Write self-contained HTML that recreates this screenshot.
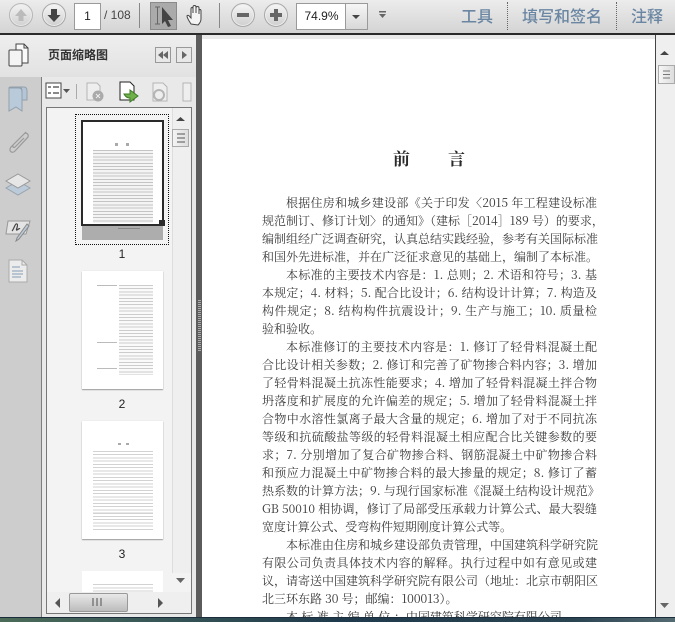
<!DOCTYPE html>
<html><head><meta charset="utf-8">
<style>
html,body{margin:0;padding:0;width:675px;height:622px;overflow:hidden;background:#fff}
body{position:relative;font-family:"Liberation Sans","Noto Sans CJK SC",sans-serif}
.a{position:absolute}
.l{position:absolute;left:262px;width:335px;height:18px;line-height:18px;font-size:12px;color:#3a3a3a;font-family:"Noto Serif CJK SC","Liberation Serif",serif;text-align:justify;text-align-last:justify;white-space:nowrap;font-weight:400;filter:blur(.25px)}
.l.i{left:286px;width:311px}
.l.e{text-align-last:left}
.rb{position:absolute;border-radius:50%;width:22px;height:22px;border:1px solid #a8a8a8;background:linear-gradient(#f6f6f6,#cfcfcf);box-shadow:inset 0 0 0 1px #eee}
.tab{position:absolute;top:5px;font-size:16px;line-height:21px;color:#6a86a2;font-family:"Noto Sans CJK SC",sans-serif;font-weight:500;white-space:nowrap}
.dots{position:absolute;top:2px;height:28px;border-left:1px dotted #666}
.th{position:absolute;left:82px;width:81px;background:#fff;box-shadow:0 1px 1px #999,0 0 1px #ddd}
.n{position:absolute;left:82px;width:80px;text-align:center;font-size:12px;color:#222;line-height:14px}
</style></head><body>
<!-- toolbar -->
<div class="a" style="left:0;top:0;width:675px;height:33px;background:linear-gradient(#ececec,#d4d4d4)"></div>
<div class="a" style="left:0;top:33px;width:675px;height:2px;background:#2b2b2b"></div>
<div class="rb" style="left:9px;top:3px;opacity:.75"></div>
<svg class="a" style="left:9px;top:3px" width="24" height="24"><path d="M12 6l6 7h-3.500v5h-5v-5H6z" fill="#bbb"/></svg>
<div class="rb" style="left:42px;top:3px"></div>
<svg class="a" style="left:42px;top:3px" width="24" height="24"><path d="M12 19l-6.500-7H9V6h6v6h3.500z" fill="#444"/></svg>
<div class="a" style="left:74px;top:3px;width:25px;height:25px;background:#fff;border:1px solid #9a9a9a;font-size:12px;line-height:25px;text-align:center;color:#222">1</div>
<div class="a" style="left:104px;top:7px;font-size:12px;line-height:16px;color:#444">/ 108</div>
<div class="a" style="left:139px;top:3px;height:25px;border-left:1px solid #888"></div>
<div class="a" style="left:150px;top:2px;width:25px;height:26px;background:#aaa;border:1px solid #8a8a8a"></div>
<svg class="a" style="left:150px;top:2px" width="27" height="28"><path d="M5 5h5M7.500 5v17M5 22h5" stroke="#666" fill="none"/><path d="M12 5l11 13h-5l3 6-3 1-3-6-3 3z" fill="#444"/></svg>
<svg class="a" style="left:185px;top:4px" width="22" height="24"><path d="M6 20c-2-3-4-6-4-8 0-1 2-1 3 1l1 1V5c0-2 2-2 2 0v4-6c0-2 3-2 3 0v6-5c0-2 3-2 3 0v6-3c0-2 2-2 2 0v8c0 3-2 5-3 6z" fill="#f4f4f4" stroke="#444" stroke-width="1"/></svg>
<div class="a" style="left:219px;top:3px;height:25px;border-left:1px solid #888"></div>
<div class="rb" style="left:231px;top:3px"></div>
<svg class="a" style="left:231px;top:3px" width="24" height="24"><rect x="6" y="10" width="12" height="4" fill="#666"/></svg>
<div class="rb" style="left:264px;top:3px"></div>
<svg class="a" style="left:264px;top:3px" width="24" height="24"><path d="M6 10h4V6h4v4h4v4h-4v4h-4v-4H6z" fill="#666"/></svg>
<div class="a" style="left:296px;top:3px;width:49px;height:25px;background:#fff;border:1px solid #9a9a9a;font-size:12px;line-height:25px;text-align:center;color:#222">74.9%</div>
<div class="a" style="left:345px;top:3px;width:21px;height:25px;background:linear-gradient(#f6f6f6,#d8d8d8);border:1px solid #9a9a9a"></div>
<svg class="a" style="left:345px;top:3px" width="22" height="27"><path d="M7 12h8l-4 4z" fill="#444"/></svg>
<svg class="a" style="left:378px;top:10px" width="10" height="10"><path d="M1 1h7v1.500H1zM1 4h7L4.500 8z" fill="#666"/></svg>
<div class="tab" style="left:461px">工具</div>
<div class="dots" style="left:507px"></div>
<div class="tab" style="left:522px">填写和签名</div>
<div class="dots" style="left:616px"></div>
<div class="tab" style="left:631px">注释</div>
<!-- left panel -->
<div class="a" style="left:0;top:35px;width:197px;height:582px;background:#cdcdcd"></div>
<div class="a" style="left:0;top:35px;width:197px;height:42px;background:linear-gradient(#eeeeee,#e2e2e2)"></div>
<svg class="a" style="left:7px;top:42px" width="24" height="26"><path d="M9 9V2h8l4 4v15h-6" fill="#fafafa" stroke="#444"/><path d="M17 2v4h4" fill="none" stroke="#444"/><rect x="2" y="8" width="13" height="16" rx="1" fill="#f4f4f4" stroke="#444"/></svg>
<div class="a" style="left:48px;top:45px;font-size:12px;line-height:20px;font-weight:700;color:#333;font-family:'Noto Sans CJK SC',sans-serif">页面缩略图</div>
<div class="a" style="left:155px;top:47px;width:14px;height:14px;border:1px solid #999;background:#e8e8e8"></div>
<svg class="a" style="left:155px;top:47px" width="16" height="16"><path d="M8 4v8L3 8zM13 4v8L8 8z" fill="#666"/></svg>
<div class="a" style="left:176px;top:47px;width:14px;height:14px;border:1px solid #999;background:#e8e8e8"></div>
<svg class="a" style="left:176px;top:47px" width="16" height="16"><path d="M6 4v8l5-4z" fill="#666"/></svg>
<!-- left rail icons -->
<svg class="a" style="left:7px;top:85px" width="22" height="30"><path d="M2 3q0-1 2-1h13q3 0 3 4v9h-5V6q0-4-3-4" fill="#b4c6d6" stroke="#92a0ac"/><path d="M2 3h10q3 0 3 4v19l-6-4-7 4z" fill="#b9cbdb" stroke="#92a0ac"/></svg>
<svg class="a" style="left:6px;top:129px" width="24" height="28"><path d="M20 3L5 18c-3 4 1 7 4 4L22 8c1-3-2-5-4-3L7 16c-1 2 1 3 2 2l9-9" fill="none" stroke="#999" stroke-width="1.200"/></svg>
<svg class="a" style="left:5px;top:172px" width="26" height="28"><path d="M13 9l12 7-12 7-12-7z" fill="#bccbd9" stroke="#98a4ae"/><path d="M13 2l12 7-12 7L1 9z" fill="#e6e6e6" stroke="#999"/></svg>
<svg class="a" style="left:5px;top:218px" width="26" height="24"><path d="M3 3h22l-4 13H1z" fill="#e4e4e4" stroke="#999"/><path d="M7 13c2-2 3-8 5-7s-2 7 0 6 2-2 3-1" fill="none" stroke="#444" stroke-width="1.200"/><path d="M22 6L12 20l-1 3 3-2L24 8z" fill="#bccbd9" stroke="#888"/></svg>
<svg class="a" style="left:7px;top:258px" width="22" height="26"><path d="M2 2h13l5 5v17H2z" fill="#ececec" stroke="#aaa"/><path d="M15 2v5h5" fill="none" stroke="#aaa"/><path d="M5 9h8M5 13h11M5 16h11M5 19h9" stroke="#a6b6c5" stroke-width="1.500"/></svg>
<!-- thumbnails pane -->
<div class="a" style="left:41px;top:77px;width:1px;height:540px;background:#7d7d7d"></div>
<div class="a" style="left:42px;top:77px;width:155px;height:540px;background:#e9e9e9"></div>
<svg class="a" style="left:45px;top:82px" width="28" height="18"><rect x="1" y="1" width="15" height="15" fill="#fff" stroke="#444"/><path d="M3 5h3M8 5h6M3 11h3M8 11h6" stroke="#444" stroke-width="1.300"/><path d="M18 7h7l-3.500 4z" fill="#555"/></svg>
<div class="a" style="left:76px;top:84px;height:15px;border-left:1px solid #aaa"></div>
<svg class="a" style="left:85px;top:81px" width="20" height="22"><path d="M2 2h10l3 3v14H2z" fill="#eee" stroke="#b5b5b5"/><circle cx="13" cy="15" r="5.500" fill="#aaa"/><path d="M11 13l4 4m0-4l-4 4" stroke="#eee"/></svg>
<svg class="a" style="left:118px;top:81px" width="22" height="22"><path d="M2 1h10l4 4v14H2z" fill="#fff" stroke="#222"/><path d="M6 13h6V9l8 6-8 6v-4q-4 0-6-4z" fill="#6fb04a" stroke="#3d7a25"/></svg>
<svg class="a" style="left:150px;top:81px" width="20" height="22"><path d="M3 2h10l4 4v14H3z" fill="#eee" stroke="#b5b5b5"/><circle cx="9" cy="14" r="5" fill="none" stroke="#b5b5b5" stroke-width="2"/></svg>
<svg class="a" style="left:182px;top:81px" width="10" height="22"><path d="M1 2h8v18H1z" fill="#eee" stroke="#b5b5b5"/></svg>
<div class="a" style="left:46px;top:107px;width:146px;height:507px;background:#f3f3f3;border:1px solid #777;box-sizing:border-box;overflow:hidden">
 <div class="a" style="left:125px;top:0;width:20px;height:465px;background:#efefef;border-left:1px solid #ddd;box-sizing:border-box"></div>
</div>
<!-- thumb 1 -->
<div class="a" style="left:75px;top:114px;width:94px;height:131px;border:1px dotted #111;box-sizing:border-box"></div>
<div class="a" style="left:81px;top:120px;width:83px;height:106px;background:#fff;border:2px solid #2a2a2a;box-sizing:border-box;overflow:hidden">
 <div class="a" style="left:32px;top:21px;width:3px;height:3px;background:#aaa"></div>
 <div class="a" style="left:43px;top:21px;width:3px;height:3px;background:#aaa"></div>
 <div class="a" style="left:10px;top:28px;width:60px;height:73px;background:repeating-linear-gradient(#c4c4c4 0 1px,#f4f4f4 1px 3.200px)"></div>
</div>
<div class="a" style="left:159px;top:220px;width:6px;height:6px;background:#2a2a2a"></div>
<div class="a" style="left:82px;top:226px;width:81px;height:14px;background:#adadad"></div>
<div class="a" style="left:118px;top:228px;width:22px;height:1px;background:#888"></div>
<div class="n" style="top:247px">1</div>
<!-- thumb 2 -->
<div class="th" style="top:271px;height:118px">
 <div class="a" style="left:15px;top:14px;width:20px;height:1px;background:#bbb"></div>
 <div class="a" style="left:37px;top:14px;width:34px;height:90px;background:repeating-linear-gradient(#ccc 0 1px,#fafafa 1px 3.200px)"></div>
 <div class="a" style="left:15px;top:71px;width:20px;height:1px;background:#bbb"></div>
 <div class="a" style="left:15px;top:97px;width:20px;height:1px;background:#bbb"></div>
</div>
<div class="n" style="top:397px">2</div>
<!-- thumb 3 -->
<div class="th" style="top:421px;height:118px">
 <div class="a" style="left:36px;top:22px;width:3px;height:2px;background:#aaa"></div>
 <div class="a" style="left:44px;top:22px;width:3px;height:2px;background:#aaa"></div>
 <div class="a" style="left:11px;top:30px;width:60px;height:79px;background:repeating-linear-gradient(#d2d2d2 0 1px,#fff 1px 3.250px)"></div>
</div>
<div class="n" style="top:547px">3</div>
<!-- thumb 4 -->
<div class="a" style="left:82px;top:571px;width:81px;height:21px;background:#fff;overflow:hidden">
 <div class="a" style="left:11px;top:13px;width:60px;height:8px;background:repeating-linear-gradient(#d2d2d2 0 1px,#fff 1px 3.250px)"></div>
</div>
<!-- thumb v scrollbar -->
<svg class="a" style="left:172px;top:112px" width="18" height="14"><path d="M4 9h9L8.500 5z" fill="#444"/></svg>
<div class="a" style="left:172px;top:129px;width:17px;height:18px;background:linear-gradient(90deg,#f4f4f4,#ddd);border:1px solid #aaa;box-sizing:border-box"></div>
<svg class="a" style="left:172px;top:129px" width="18" height="18"><path d="M5 5h8M5 9h8M5 13h8" stroke="#555"/></svg>
<svg class="a" style="left:172px;top:574px" width="18" height="12"><path d="M4 4h9L8.500 9z" fill="#666"/></svg>
<!-- thumb h scrollbar -->
<div class="a" style="left:47px;top:592px;width:144px;height:21px;background:#efefef"></div>
<svg class="a" style="left:52px;top:596px" width="12" height="14"><path d="M8 2v10L3 7z" fill="#555"/></svg>
<div class="a" style="left:69px;top:593px;width:59px;height:19px;background:linear-gradient(#e8e8e8,#bcbcbc);border:1px solid #999;border-radius:2px;box-sizing:border-box"></div>
<svg class="a" style="left:90px;top:596px" width="16" height="12"><path d="M3 2v8M7 2v8M11 2v8" stroke="#666" stroke-width="1.200"/></svg>
<svg class="a" style="left:155px;top:596px" width="12" height="14"><path d="M3 2v10l5-5z" fill="#555"/></svg>
<!-- divider -->
<div class="a" style="left:196px;top:35px;width:6px;height:582px;background:#5c5c5c"></div>
<div class="a" style="left:198px;top:300px;width:3px;height:52px;background:repeating-linear-gradient(#aaa 0 1px,#5c5c5c 1px 2px)"></div>
<!-- document -->
<div class="a" style="left:202px;top:35px;width:453px;height:4px;background:#eaeaea"></div>
<div class="a" style="left:393px;top:147px;font-size:17px;line-height:22px;font-weight:700;color:#2a2a2a;font-family:'Noto Serif CJK SC',serif;white-space:nowrap">前<span style="margin-left:38px">言</span></div>
<div class="l i" style="top:194px">根据住房和城乡建设部《关于印发〈2015 年工程建设标准</div>
<div class="l" style="top:212px">规范制订、修订计划〉的通知》（建标［2014］189 号）的要求，</div>
<div class="l" style="top:230px">编制组经广泛调查研究，认真总结实践经验，参考有关国际标准</div>
<div class="l" style="top:248px">和国外先进标准，并在广泛征求意见的基础上，编制了本标准。</div>
<div class="l i" style="top:266px">本标准的主要技术内容是：1. 总则；2. 术语和符号；3. 基</div>
<div class="l" style="top:284px">本规定；4. 材料；5. 配合比设计；6. 结构设计计算；7. 构造及</div>
<div class="l" style="top:302px">构件规定；8. 结构构件抗震设计；9. 生产与施工；10. 质量检</div>
<div class="l e" style="top:320px">验和验收。</div>
<div class="l i" style="top:338px">本标准修订的主要技术内容是：1. 修订了轻骨料混凝土配</div>
<div class="l" style="top:356px">合比设计相关参数；2. 修订和完善了矿物掺合料内容；3. 增加</div>
<div class="l" style="top:374px">了轻骨料混凝土抗冻性能要求；4. 增加了轻骨料混凝土拌合物</div>
<div class="l" style="top:392px">坍落度和扩展度的允许偏差的规定；5. 增加了轻骨料混凝土拌</div>
<div class="l" style="top:410px">合物中水溶性氯离子最大含量的规定；6. 增加了对于不同抗冻</div>
<div class="l" style="top:428px">等级和抗硫酸盐等级的轻骨料混凝土相应配合比关键参数的要</div>
<div class="l" style="top:446px">求；7. 分别增加了复合矿物掺合料、钢筋混凝土中矿物掺合料</div>
<div class="l" style="top:464px">和预应力混凝土中矿物掺合料的最大掺量的规定；8. 修订了蓄</div>
<div class="l" style="top:482px">热系数的计算方法；9. 与现行国家标准《混凝土结构设计规范》</div>
<div class="l" style="top:500px">GB 50010 相协调，修订了局部受压承载力计算公式、最大裂缝</div>
<div class="l e" style="top:518px;letter-spacing:-.1px">宽度计算公式、受弯构件短期刚度计算公式等。</div>
<div class="l i" style="top:536px">本标准由住房和城乡建设部负责管理，中国建筑科学研究院</div>
<div class="l" style="top:554px">有限公司负责具体技术内容的解释。执行过程中如有意见或建</div>
<div class="l" style="top:572px">议，请寄送中国建筑科学研究院有限公司（地址：北京市朝阳区</div>
<div class="l e" style="top:590px">北三环东路 30 号；邮编：100013）。</div>
<div class="l e" style="left:286px;top:608px;width:300px"><span style="letter-spacing:3.400px">本标准主编单位</span>：<span>中国建筑科学研究院有限公司</span></div>
<!-- main scrollbar -->
<div class="a" style="left:655px;top:35px;width:20px;height:582px;background:#efefef;border-left:1px solid #444;box-sizing:border-box"></div>
<svg class="a" style="left:656px;top:46px" width="19" height="14"><path d="M4 9h9L8.500 5z" fill="#444"/></svg>
<div class="a" style="left:658px;top:65px;width:17px;height:19px;background:linear-gradient(90deg,#f6f6f6,#ddd);border:1px solid #aaa;box-sizing:border-box"></div>
<svg class="a" style="left:658px;top:65px" width="17" height="19"><path d="M5 6h7M5 9.500h7M5 13h7" stroke="#777"/></svg>
<svg class="a" style="left:656px;top:600px" width="19" height="12"><path d="M4 3h9L8.500 8z" fill="#666"/></svg>
<!-- bottom strip -->
<div class="a" style="left:0;top:617px;width:675px;height:5px;background:linear-gradient(90deg,#4c6b58 0%,#3a5a58 20%,#1f3a4c 50%,#2b4452 85%,#556b72 100%)"></div>
<div class="a" style="left:0;top:617px;width:675px;height:1px;background:#1b2c3a"></div>
</body></html>
